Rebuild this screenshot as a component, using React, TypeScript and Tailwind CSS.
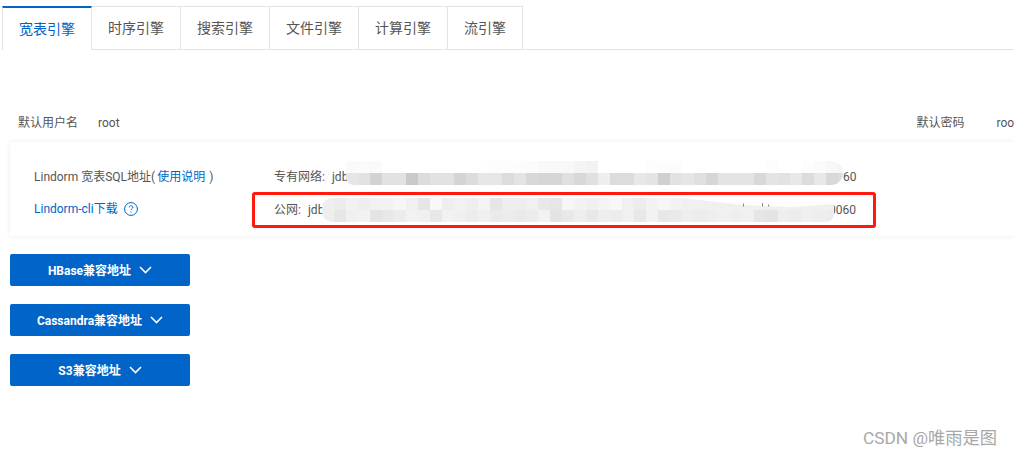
import React from 'react';

const tabs = ['宽表引擎', '时序引擎', '搜索引擎', '文件引擎', '计算引擎', '流引擎'];
const buttons = ['HBase兼容地址', 'Cassandra兼容地址', 'S3兼容地址'];

// mosaic cell shades, 12px wide each
const vpcTop = ['fafafa', 'fbfbfb', 'fafafa', 'ffffff', 'ffffff', 'ffffff', 'ffffff', 'ffffff', 'ffffff', 'ffffff', 'ffffff', 'fefefe', 'fdfdfd', 'fdfdfd', 'fcfcfc', 'fbfbfb', 'f9f9f9', 'f8f8f8', 'f8f8f8', 'f4f4f4', 'f2f2f2', 'ffffff', 'ffffff', 'ffffff', 'ffffff', 'fdfdfd', 'fcfcfc', 'fcfcfc', 'ffffff', 'ffffff', 'ffffff', 'ffffff', 'ffffff', 'ffffff', 'ffffff', 'fdfdfd', 'ffffff', 'ffffff', 'fdfdfd', 'fbfbfb', 'f8f8f8', 'f4f4f4'];
const vpcBottom = ['e6e6e6', 'e2e2e2', 'd2d2d2', 'e2e2e2', 'e2e2e2', 'cacaca', 'dcdcdc', 'e2e2e2', 'e2e2e2', 'd4d4d4', 'dcdcdc', 'e6e6e6', 'e6e6e6', 'dcdcdc', 'e4e4e4', 'd8d8d8', 'd6d6d6', 'd6d6d6', 'e0e0e0', 'd8d8d8', 'e0e0e0', 'eeeeee', 'dcdcdc', 'dcdcdc', 'e8e8e8', 'e4e4e4', 'd0d0d0', 'e2e2e2', 'e6e6e6', 'e0e0e0', 'd6d6d6', 'e4e4e4', 'e4e4e4', 'e4e4e4', 'd8d8d8', 'e4e4e4', 'e2e2e2', 'e8e8e8', 'dcdcdc', 'e8e8e8', 'd8d8d8', 'dcdcdc'];
const netTop = ['eeeeee', 'ececec', 'f2f2f2', 'eeeeee', 'f2f2f2', 'f2f2f2', 'f6f6f6', 'f0f0f0', 'e6e6e6', 'f8f8f8', 'eeeeee', 'f2f2f2', 'eeeeee', 'f4f4f4', 'e6e6e6', 'eeeeee', 'eeeeee', 'f0f0f0', 'e8e8e8', 'e6e6e6', 'f6f6f6', 'f2f2f2', 'f0f0f0', 'f4f4f4', 'f8f8f8', 'f0f0f0', 'ececec', 'f2f2f2', 'f6f6f6', 'f2f2f2', 'f0f0f0', 'f0f0f0', 'f0f0f0', 'f0f0f0', 'f0f0f0', 'f0f0f0', 'f0f0f0', 'f0f0f0', 'f0f0f0', 'f0f0f0', 'f0f0f0', 'f0f0f0', 'f0f0f0'];
const netBottom = ['eeeeee', 'e6e6e6', 'f0f0f0', 'f2f2f2', 'e4e4e4', 'e8e8e8', 'ececec', 'f2f2f2', 'f0f0f0', 'e8e8e8', 'f2f2f2', 'f0f0f0', 'ececec', 'f0f0f0', 'eaeaea', 'ececec', 'eaeaea', 'ececec', 'f2f2f2', 'e4e4e4', 'e8e8e8', 'eeeeee', 'e8e8e8', 'eeeeee', 'ececec', 'f0f0f0', 'e8e8e8', 'f2f2f2', 'e8e8e8', 'eaeaea', 'eeeeee', 'ececec', 'eeeeee', 'f0f0f0', 'eeeeee', 'f0f0f0', 'e6e6e6', 'e4e4e4', 'eeeeee', 'ececec', 'f0f0f0', 'eeeeee', 'ececec'];

function Mosaic({ top, bottom, className, children }: { top: string[]; bottom: string[]; className: string; children?: React.ReactNode }) {
  return (
    <div className={`relative z-10 flex flex-col shrink-0 overflow-hidden h-[24px] ${className}`}>
      <div className="flex h-[12px]">
        {top.map((c, i) => (
          <div key={i} className="w-[12px] shrink-0" style={{ backgroundColor: `#${c}` }} />
        ))}
      </div>
      <div className="flex h-[12px]">
        {bottom.map((c, i) => (
          <div key={i} className="w-[12px] shrink-0" style={{ backgroundColor: `#${c}` }} />
        ))}
      </div>
      {children}
    </div>
  );
}

export default function App() {
  return (
    <div className="relative w-[1014px] h-[455px] overflow-hidden bg-white text-[12px] text-[#555] font-['Roboto','Noto_Sans_CJK_SC',sans-serif]">
      {/* Tabs */}
      <div className="flex pt-[6px] pl-[2px] h-[50px]">
        {tabs.map((tab, i) => (
          <div
            key={tab}
            className={
              i === 0
                ? 'w-[90px] h-[44px] flex items-center justify-center text-[14px] text-[#0064c8] bg-white border-t-2 border-t-[#0064c8] border-l border-l-[#e3e3e3] border-r border-r-[#e3e3e3]'
                : i === 5
                  ? 'w-[75px] h-[44px] flex items-center justify-center text-[14px] text-[#555] border border-l-0 border-[#e3e3e3]'
                  : 'w-[89px] h-[44px] flex items-center justify-center text-[14px] text-[#555] border border-l-0 border-[#e3e3e3]'
            }
          >
            {tab}
          </div>
        ))}
        <div className="flex-1 border-b border-[#e3e3e3]" />
      </div>

      {/* Default account */}
      <div className="flex items-center h-[20px] mt-[63px] pl-[18px]">
        <span className="w-[80px] shrink-0">默认用户名</span>
        <span className="shrink-0">root</span>
        <span className="ml-[797px] w-[80px] shrink-0">默认密码</span>
        <span className="shrink-0">root</span>
      </div>

      {/* Address card */}
      <div className="ml-[10px] mt-[9px] w-[1004px] h-[94px] bg-white shadow-[0_0_6px_rgba(0,0,0,0.08)] flex">
        <div className="w-[242px] pl-[24px] pt-[26px] flex flex-col gap-[15px]">
          <div className="h-[17px] flex items-center">
            Lindorm 宽表SQL地址(
            <span className="text-[#0064c8] ml-[2px]">使用说明</span>
            <span className="ml-[4px]">)</span>
          </div>
          <div className="h-[17px] flex items-center text-[#0064c8]">
            Lindorm-cli下载
            <svg className="ml-[6px]" width="14" height="14" viewBox="0 0 14 14" fill="none" stroke="#0064c8">
              <circle cx="7" cy="7" r="6.4" strokeWidth="1" />
              <path d="M5.2 5.4c0-1 .8-1.7 1.8-1.7s1.8.7 1.8 1.6c0 1.4-1.8 1.4-1.8 2.8" strokeWidth="1" />
              <path d="M7 9.4v1.1" strokeWidth="1.1" />
            </svg>
          </div>
        </div>
        <div className="flex flex-col">
          <div className="h-[50px] pl-[22px] flex items-start">
            <span className="mt-[26px] w-[58px] whitespace-nowrap">专有网络:</span>
            <span className="mt-[26px] w-[14px] whitespace-nowrap">jdb</span>
            <Mosaic top={vpcTop} bottom={vpcBottom} className="mt-[19px] w-[497px] rounded-bl-[8px] rounded-r-[12px]" />
            <span className="mt-[26px]">60</span>
          </div>
          <div className="w-[624px] h-[36px] border-[3px] border-[#ff1a0d] rounded-[3px] pl-[19px] flex items-center">
            <span className="w-[34px] whitespace-nowrap">公网:</span>
            <span className="w-[14px] whitespace-nowrap">jdb</span>
            <Mosaic top={netTop} bottom={netBottom} className="w-[512px] rounded-l-[10px] rounded-r-[8px]">
              {/* wiped part of the blur, a few letter stems show through */}
              <svg className="absolute left-0 top-0" width="512" height="24" viewBox="0 0 512 24">
                <polygon points="361,0 421,7 470,9 512,6 512,0" fill="#fff" />
                <path d="M421.5 5.5v3M440.5 5v3.5M446.5 6.5v2" stroke="#888" strokeWidth="1" />
              </svg>
            </Mosaic>
            <span className="-ml-[5px]">0060</span>
          </div>
        </div>
      </div>

      {/* Compat buttons */}
      <div className="ml-[10px] mt-[18px] flex flex-col gap-[18px]">
        {buttons.map((b) => (
          <div key={b} className="w-[180px] h-[32px] rounded-[2px] bg-[#0064c8] text-white font-bold flex items-center justify-center gap-[8px] pt-[1px]">
            {b}
            <svg className="-mt-[2px]" width="13" height="8" viewBox="0 0 13 8" fill="none" stroke="#fff" strokeWidth="1.6">
              <path d="M1 1l5.5 5.5L12 1" />
            </svg>
          </div>
        ))}
      </div>

      {/* Watermark */}
      <div className="absolute left-[863px] top-[426px] text-[17.3px] text-[#a8a8a8] whitespace-nowrap">CSDN @唯雨是图</div>
    </div>
  );
}
